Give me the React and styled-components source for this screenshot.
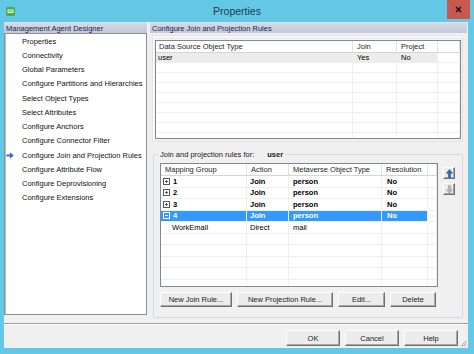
import React from "react";
import styled, { createGlobalStyle } from "styled-components";

const GlobalStyle = createGlobalStyle`
  html, body {
    margin: 0;
    padding: 0;
  }
  body {
    font-family: "Liberation Sans", Arial, sans-serif;
    font-size: 7.5px;
    color: #000;
    background: #63c7e6;
  }
`;

const steps = [
  "Properties",
  "Connectivity",
  "Global Parameters",
  "Configure Partitions and Hierarchies",
  "Select Object Types",
  "Select Attributes",
  "Configure Anchors",
  "Configure Connector Filter",
  "Configure Join and Projection Rules",
  "Configure Attribute Flow",
  "Configure Deprovisioning",
  "Configure Extensions",
];

const ACTIVE = "Configure Join and Projection Rules";

const objectCols = "197px 44px 41px 1fr";
const mappingCols = "86px 42px 93px 46px 1fr";

const mappingRows = [
  { group: "1", action: "Join", type: "person", res: "No", level: 0 },
  { group: "2", action: "Join", type: "person", res: "No", level: 0 },
  { group: "3", action: "Join", type: "person", res: "No", level: 0 },
  { group: "4", action: "Join", type: "person", res: "No", level: 0, open: true, selected: true },
  { group: "WorkEmail", action: "Direct", type: "mail", res: "", level: 1 },
];

// icons
const AppIcon = () => (
  <svg width="9" height="9" viewBox="0 0 9 9">
    <rect x="0" y="0" width="9" height="9" rx="1.5" fill="#48b04c" />
    <rect x="1.5" y="2.5" width="6" height="3.5" rx="0.6" fill="#e9f7e4" />
    <rect x="2.5" y="3.4" width="4" height="1.6" fill="#7cc66f" />
  </svg>
);

const CloseGlyph = () => (
  <svg width="7" height="7" viewBox="0 0 7 7">
    <path d="M1 1L6 6M6 1L1 6" stroke="#1b1b1b" strokeWidth="1.7" />
  </svg>
);

const StepArrow = () => (
  <svg width="8" height="7" viewBox="0 0 8 7">
    <path d="M0.5 2.4H4V0.3L7.7 3.5L4 6.7V4.6H0.5Z" fill="#2f6fc0" />
  </svg>
);

const Expander = ({ open, light }) => {
  const c = light ? "#ffffff" : "#5a5a5a";
  return (
    <svg width="7" height="7" viewBox="0 0 7 7">
      <rect x="0.5" y="0.5" width="6" height="6" fill="none" stroke={c} />
      <path d={open ? "M2 3.5H5" : "M2 3.5H5M3.5 2V5"} stroke={c} />
    </svg>
  );
};

const MoveArrow = ({ down, enabled }) => (
  <svg width="7" height="9" viewBox="0 0 7 9" style={down ? { transform: "rotate(180deg)" } : undefined}>
    <path
      d="M3.5 0.5L6.6 4.2H4.6V8.5H2.4V4.2H0.4Z"
      fill={enabled ? "#2a6cc0" : "#b3b3b3"}
      stroke={enabled ? "#173f78" : "#9a9a9a"}
      strokeWidth="0.5"
    />
  </svg>
);

const Grip = () => (
  <svg width="7" height="7" viewBox="0 0 7 7">
    <path d="M6.5 0.5L0.5 6.5M6.5 2.5L2.5 6.5M6.5 4.5L4.5 6.5" stroke="#a8a8a8" />
  </svg>
);

export default function App() {
  return (
    <>
      <GlobalStyle />
      <Window>
        <TitleBar>
          <IconSlot>
            <AppIcon />
          </IconSlot>
          <Title>Properties</Title>
          <CloseButton>
            <CloseGlyph />
          </CloseButton>
        </TitleBar>

        <Body>
          <Main>
            {/* left: designer steps */}
            <LeftPane>
              <PaneHeader>Management Agent Designer</PaneHeader>
              <StepList>
                {steps.map((s) => (
                  <Step key={s}>
                    <StepMark>{s === ACTIVE && <StepArrow />}</StepMark>
                    {s}
                  </Step>
                ))}
              </StepList>
            </LeftPane>

            {/* right: page */}
            <RightPane>
              <PaneHeader>Configure Join and Projection Rules</PaneHeader>
              <Page>
                <TopFrame>
                  <ListBox $h={99}>
                    <HeadRow $cols={objectCols}>
                      <HeadCell $pad={3}>Data Source Object Type</HeadCell>
                      <HeadCell>Join</HeadCell>
                      <HeadCell>Project</HeadCell>
                      <HeadCell />
                    </HeadRow>
                    <Row $cols={objectCols} $h={10}>
                      <Cell $pad={2} $bg="#ececec">user</Cell>
                      <Cell $bg="#ececec">Yes</Cell>
                      <Cell $bg="#ececec">No</Cell>
                      <Cell />
                    </Row>
                    {Array.from({ length: 8 }).map((_, i) => (
                      <Row key={i} $cols={objectCols} $h={10}>
                        <Cell />
                        <Cell />
                        <Cell />
                        <Cell />
                      </Row>
                    ))}
                  </ListBox>
                </TopFrame>

                <GroupBox>
                  <Legend>
                    Join and projection rules for:<LegendValue>user</LegendValue>
                  </Legend>
                  <GroupInner>
                    <ListRow>
                      <ListBox $h={124} $w={278}>
                        <HeadRow $cols={mappingCols}>
                          <HeadCell>Mapping Group</HeadCell>
                          <HeadCell>Action</HeadCell>
                          <HeadCell>Metaverse Object Type</HeadCell>
                          <HeadCell>Resolution</HeadCell>
                          <HeadCell />
                        </HeadRow>
                        {mappingRows.map((r) => {
                          const bg = r.selected ? "#3399ff" : undefined;
                          const bold = r.level === 0;
                          return (
                            <Row key={r.group} $cols={mappingCols} $h={11.5}>
                              <Cell $pad={r.level ? 11 : 2} $bg={bg} $bold={bold} $light={r.selected}>
                                {r.level === 0 && (
                                  <ExpanderSlot>
                                    <Expander open={r.open} light={r.selected} />
                                  </ExpanderSlot>
                                )}
                                {r.group}
                              </Cell>
                              <Cell $pad={3} $bg={bg} $bold={bold} $light={r.selected}>
                                {r.action}
                              </Cell>
                              <Cell $bg={bg} $bold={bold} $light={r.selected}>
                                {r.type}
                              </Cell>
                              <Cell $pad={5} $bg={bg} $bold={bold} $light={r.selected}>
                                {r.res}
                              </Cell>
                              <Cell />
                            </Row>
                          );
                        })}
                        {Array.from({ length: 6 }).map((_, i) => (
                          <Row key={i} $cols={mappingCols} $h={11.5}>
                            <Cell />
                            <Cell />
                            <Cell />
                            <Cell />
                            <Cell />
                          </Row>
                        ))}
                      </ListBox>
                      <MoveButtons>
                        <SmallButton>
                          <MoveArrow enabled />
                        </SmallButton>
                        <SmallButton>
                          <MoveArrow down />
                        </SmallButton>
                      </MoveButtons>
                    </ListRow>
                    <ButtonRow>
                      <Button $w={72}>New Join Rule...</Button>
                      <Button $w={96}>New Projection Rule...</Button>
                      <Button $w={47}>Edit...</Button>
                      <Button $w={46}>Delete</Button>
                    </ButtonRow>
                  </GroupInner>
                </GroupBox>
              </Page>
            </RightPane>
          </Main>

          <Footer>
            <Button $w={54} $h={16}>OK</Button>
            <Button $w={54} $h={16}>Cancel</Button>
            <Button $w={54} $h={16}>Help</Button>
            <GripCorner>
              <Grip />
            </GripCorner>
          </Footer>
        </Body>
      </Window>
    </>
  );
}

const Window = styled.div`
  display: flex;
  flex-direction: column;
  width: 474px;
  height: 354px;
  box-sizing: border-box;
  padding: 0 6px 6px 4px;
  background: #63c7e6;
  overflow: hidden;
`;

const TitleBar = styled.div`
  display: grid;
  grid-template-columns: 1fr auto 1fr;
  align-items: start;
  height: 22px;
  margin: 0 -6px 0 -4px;
`;

const IconSlot = styled.div`
  display: flex;
  padding: 7px 0 0 6px;
`;

const Title = styled.div`
  padding-top: 5px;
  font-size: 10.5px;
  line-height: 13px;
  color: #1c3b57;
`;

const CloseButton = styled.div`
  justify-self: end;
  display: flex;
  align-items: center;
  justify-content: center;
  width: 23px;
  height: 19px;
  margin-right: 4px;
  background: #c9584f;
`;

const Body = styled.div`
  flex: 1;
  display: flex;
  flex-direction: column;
  background: #f0f0f0;
`;

const Main = styled.div`
  display: flex;
  gap: 3px;
  height: 301px;
`;

const LeftPane = styled.div`
  display: flex;
  flex-direction: column;
  width: 143px;
  padding-bottom: 8px;
`;

const PaneHeader = styled.div`
  flex-shrink: 0;
  height: 11px;
  box-sizing: border-box;
  padding-left: 2px;
  line-height: 11px;
  color: #17264a;
  white-space: nowrap;
  overflow: hidden;
  background: linear-gradient(#d3d9e6, #c2c9db);
  border-top: 1px solid #dde2ec;
`;

const StepList = styled.div`
  flex: 1;
  box-sizing: border-box;
  padding-top: 0;
  background: #fff;
  border: 1px solid #8b8f96;
  box-shadow: inset 1px 0 0 #b9bcc2;
`;

const Step = styled.div`
  display: flex;
  align-items: center;
  height: 14.25px;
  white-space: nowrap;
  color: #111;
`;

const StepMark = styled.span`
  display: flex;
  align-items: center;
  width: 16px;
  padding-left: 1px;
`;

const RightPane = styled.div`
  flex: 1;
  display: flex;
  flex-direction: column;
  margin-right: 1px;
`;

const Page = styled.div`
  flex: 1;
  display: flex;
  flex-direction: column;
  gap: 8px;
  padding: 2px 4px 5px 2px;
`;

const TopFrame = styled.div`
  padding: 4px 1px 2px 2px;
  border: 1px solid #e2e2e2;
  box-shadow: inset 1px 1px 0 #ffffff;
`;

const ListBox = styled.div`
  width: ${(p) => (p.$w ? `${p.$w}px` : "auto")};
  height: ${(p) => p.$h}px;
  box-sizing: border-box;
  flex-shrink: 0;
  border: 1px solid #828790;
  background: #fff;
  overflow: hidden;
`;

const HeadRow = styled.div`
  display: grid;
  grid-template-columns: ${(p) => p.$cols};
  height: 12px;
  box-sizing: border-box;
  border-bottom: 1px solid #d5d5d5;
`;

const HeadCell = styled.div`
  padding-left: ${(p) => p.$pad ?? 4}px;
  line-height: 11px;
  color: #1e1e1e;
  white-space: nowrap;
  overflow: hidden;
  border-right: 1px solid #e3e3e3;
`;

const Row = styled.div`
  display: grid;
  grid-template-columns: ${(p) => p.$cols};
  height: ${(p) => p.$h}px;
`;

const Cell = styled.div`
  display: flex;
  align-items: center;
  padding-left: ${(p) => p.$pad ?? 4}px;
  white-space: nowrap;
  overflow: hidden;
  font-weight: ${(p) => (p.$bold ? "bold" : "normal")};
  color: ${(p) => (p.$light ? "#fff" : "#000")};
  background: ${(p) => p.$bg ?? "transparent"};
  border-right: 1px solid #efefef;
  border-bottom: 1px solid #efefef;
`;

const ExpanderSlot = styled.span`
  display: flex;
  margin-right: 3px;
`;

const GroupBox = styled.fieldset`
  flex: 1;
  min-width: 0;
  margin: 0 0 0 1px;
  padding: 4px 7px 9px 6px;
  border: 1px solid #d5dadf;
  border-radius: 2px;
`;

const Legend = styled.legend`
  margin-left: -2px;
  padding: 0 2px;
  line-height: 9px;
  color: #1a1a1a;
`;

const LegendValue = styled.b`
  margin-left: 13px;
`;

const GroupInner = styled.div`
  display: flex;
  flex-direction: column;
  gap: 5px;
`;

const ListRow = styled.div`
  display: flex;
  gap: 5px;
`;

const MoveButtons = styled.div`
  display: flex;
  flex-direction: column;
  gap: 4px;
  padding-top: 4px;
`;

const SmallButton = styled.div`
  display: flex;
  align-items: center;
  justify-content: center;
  width: 12px;
  height: 12px;
  box-sizing: border-box;
  background: #ececec;
  border: 1px solid;
  border-color: #fdfdfd #6f6f6f #6f6f6f #fdfdfd;
  box-shadow: inset -1px -1px 0 #a6a6a6;
`;

const ButtonRow = styled.div`
  display: flex;
  gap: 5px;
`;

const Button = styled.div`
  display: flex;
  align-items: center;
  justify-content: center;
  width: ${(p) => p.$w}px;
  height: ${(p) => p.$h ?? 15}px;
  box-sizing: border-box;
  color: #1a1a1a;
  white-space: nowrap;
  background: #ececec;
  border: 1px solid;
  border-color: #fdfdfd #6f6f6f #6f6f6f #fdfdfd;
  box-shadow: inset -1px -1px 0 #a6a6a6;
`;

const Footer = styled.div`
  position: relative;
  flex: 1;
  display: flex;
  justify-content: flex-end;
  align-items: flex-start;
  gap: 5px;
  padding: 6px 10px 0 0;
  border-top: 1px solid #a0a0a0;
  box-shadow: inset 0 1px 0 #ffffff;
`;

const GripCorner = styled.div`
  position: absolute;
  right: 1px;
  bottom: 1px;
  display: flex;
`;
